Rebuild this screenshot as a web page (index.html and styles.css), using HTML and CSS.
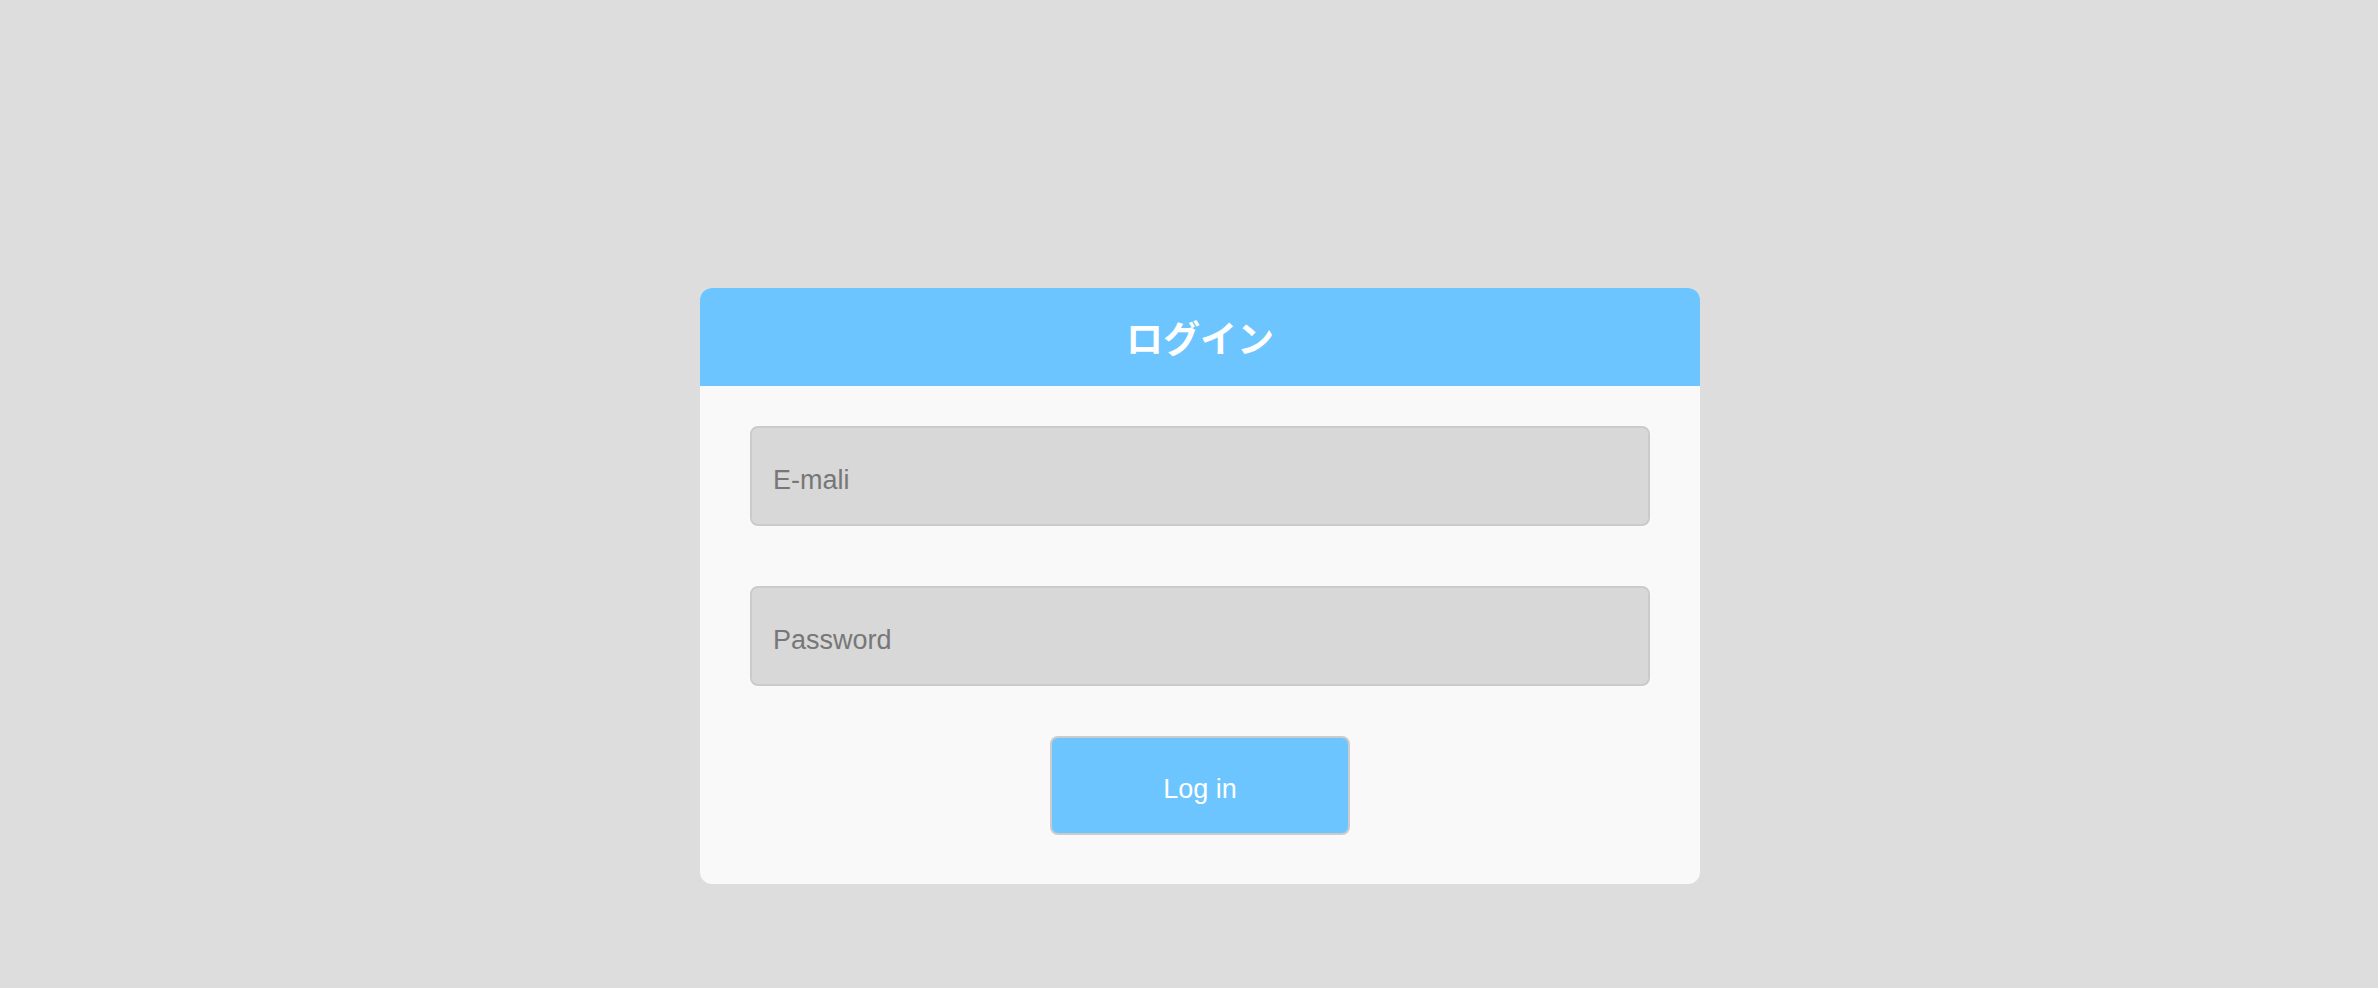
FILE: index.html
```html
<!DOCTYPE html>
<html lang="ja">
<head>
<meta charset="utf-8">
<title>ログイン</title>
<link rel="stylesheet" href="styles.css">
</head>
<body>
<main class="page">
  <form class="card">
    <h1 class="card-title">ログイン</h1>
    <div class="card-body">
      <input class="field" type="email" placeholder="E-mali">
      <input class="field" type="password" placeholder="Password">
      <button class="btn" type="button">Log in</button>
    </div>
  </form>
</main>
</body>
</html>
```
FILE: styles.css
```css
html, body {
  margin: 0;
  padding: 0;
  background: #dddddd;
  height: 100%;
}
body {
  font-family: "Liberation Sans", Arial, "Noto Sans CJK JP", sans-serif;
}
.page {
  padding: 288px 0 0 700px;
}
.card {
  width: 1000px;
  background: #f9f9f9;
  border-radius: 12px;
  overflow: hidden;
  margin: 0;
}
.card-title {
  margin: 0;
  height: 98px;
  background: #6cc5fe;
  color: #ffffff;
  font-family: "Noto Sans CJK JP", sans-serif;
  font-weight: 700;
  font-size: 37px;
  display: flex;
  align-items: center;
  justify-content: center;
}
.card-body {
  display: flex;
  flex-direction: column;
  align-items: center;
  padding: 40px 50px 49px;
}
.field {
  box-sizing: border-box;
  width: 900px;
  height: 100px;
  margin: 0 0 60px;
  padding: 8px 21px 0;
  background: #d8d8d8;
  border: 2px solid #cbcbcb;
  border-radius: 8px;
  font-family: "Liberation Sans", Arial, sans-serif;
  font-size: 27px;
  color: #444;
  outline: none;
}
.field:nth-of-type(2) {
  margin-bottom: 50px;
}
.field::placeholder {
  color: #777777;
}
.btn {
  box-sizing: border-box;
  width: 300px;
  height: 99px;
  padding: 7px 0 0;
  background: #6cc5fe;
  border: 2px solid #cbcbcb;
  border-radius: 8px;
  color: #ffffff;
  font-family: "Liberation Sans", Arial, sans-serif;
  font-size: 27px;
  cursor: pointer;
}
```
